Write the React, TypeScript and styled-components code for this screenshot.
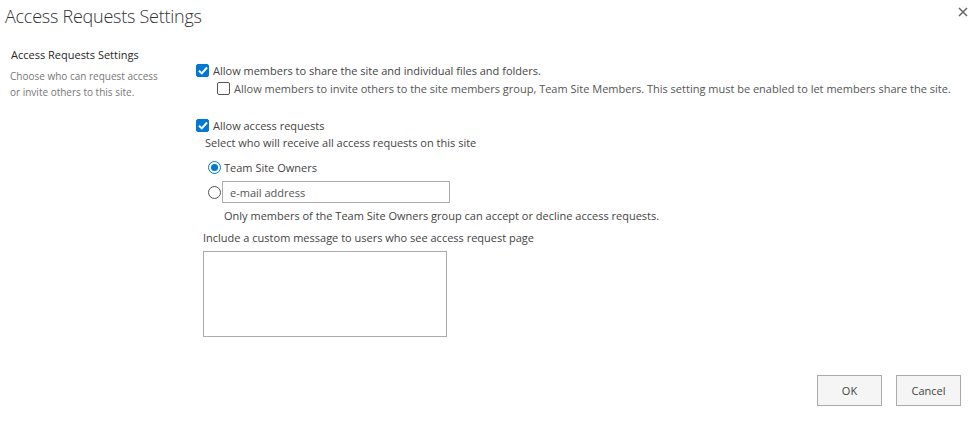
import React from "react";
import styled, { createGlobalStyle } from "styled-components";

const Global = createGlobalStyle`
  html, body { margin: 0; padding: 0; background: #fff; }
  body { font-family: "Open Sans", "Noto Sans", sans-serif; color: #444; }
  * { box-sizing: border-box; }
`;

const Page = styled.div`
  width: 978px;
  height: 427px;
  display: flex;
  flex-direction: column;
`;

const Header = styled.div`
  display: flex;
  justify-content: space-between;
  align-items: flex-start;
  padding: 4px 10px 0 5px;
  height: 44px;
`;

const Title = styled.h1`
  margin: 0;
  font-weight: 300;
  font-size: 18px;
  color: #333;
  letter-spacing: -0.25px;
`;

const Close = styled.button`
  border: 0;
  background: none;
  padding: 0;
  margin-top: 3px;
  width: 10px;
  height: 10px;
  display: flex;
  cursor: pointer;
`;

const Body = styled.div`
  display: flex;
  padding-left: 10px;
`;

const Left = styled.div`
  width: 186px;
  flex: none;
`;

const SectionTitle = styled.div`
  font-size: 11px;
  color: #262626;
  margin-top: 3px;
  padding-left: 1px;
  line-height: 16px;
`;

const SectionDesc = styled.div`
  font-size: 10px;
  color: #777;
  line-height: 16px;
  margin-top: 5px;
`;

const Right = styled.div`
  display: flex;
  flex-direction: column;
  font-size: 11px;
  color: #444;
  padding-top: 17px;
`;

const CheckRow = styled.label<{ $indent?: number; $mt?: number; $muted?: boolean }>`
  display: flex;
  align-items: center;
  gap: 4px;
  margin-left: ${(p) => p.$indent ?? 0}px;
  margin-top: ${(p) => p.$mt ?? 0}px;
  height: 18px;
  white-space: nowrap;
  color: ${(p) => (p.$muted ? "#555" : "#444")};
`;

const Box = styled.span<{ $checked?: boolean }>`
  width: 13px;
  height: 13px;
  border-radius: 2px;
  flex: none;
  display: flex;
  align-items: center;
  justify-content: center;
  background: ${(p) => (p.$checked ? "#0078d4" : "#fff")};
  border: 1px solid ${(p) => (p.$checked ? "#0078d4" : "#555")};
`;

const Text = styled.span<{ $indent?: number; $mt?: number }>`
  display: block;
  margin-left: ${(p) => p.$indent ?? 0}px;
  margin-top: ${(p) => p.$mt ?? 0}px;
  line-height: 18px;
  white-space: nowrap;
`;

const RadioRow = styled.div<{ $mt?: number; $gap?: number }>`
  display: flex;
  align-items: center;
  gap: ${(p) => p.$gap ?? 3}px;
  margin-left: 12px;
  margin-top: ${(p) => p.$mt ?? 0}px;
`;

const Radio = styled.span<{ $checked?: boolean }>`
  width: 13px;
  height: 13px;
  border-radius: 50%;
  flex: none;
  border: 1px solid ${(p) => (p.$checked ? "#0078d4" : "#555")};
  display: flex;
  align-items: center;
  justify-content: center;
  &::after {
    content: "";
    width: 7px;
    height: 7px;
    border-radius: 50%;
    background: ${(p) => (p.$checked ? "#0078d4" : "transparent")};
  }
`;

const EmailInput = styled.div`
  width: 228px;
  height: 22px;
  border: 1px solid #ababab;
  padding: 0 7px;
  display: flex;
  align-items: center;
  color: #555;
  font-size: 11px;
`;

const TextArea = styled.div`
  width: 244px;
  height: 86px;
  border: 1px solid #ababab;
  margin-left: 7px;
  margin-top: 4px;
`;

const Footer = styled.div`
  display: flex;
  justify-content: flex-end;
  gap: 14px;
  padding-right: 17px;
  margin-top: 38px;
`;

const Button = styled.button`
  width: 65px;
  height: 31px;
  border: 1px solid #ababab;
  background: #f5f5f5;
  font-family: inherit;
  font-size: 11px;
  color: #444;
  padding: 0;
`;

const Check = () => (
  <svg width="10" height="9" viewBox="0 0 10 9">
    <path d="M1 4.8 L3.8 7.4 L9 1.5" stroke="#fff" strokeWidth="2" fill="none" />
  </svg>
);

export default function App() {
  return (
    <Page>
      <Global />
      <Header>
        <Title>Access Requests Settings</Title>
        <Close aria-label="Close">
          <svg width="10" height="10" viewBox="0 0 10 10">
            <path d="M1 1 L9 9 M9 1 L1 9" stroke="#666" strokeWidth="1.5" />
          </svg>
        </Close>
      </Header>
      <Body>
        <Left>
          <SectionTitle>Access Requests Settings</SectionTitle>
          <SectionDesc>
            Choose who can request access
            <br />
            or invite others to this site.
          </SectionDesc>
        </Left>
        <Right>
          <CheckRow>
            <Box $checked>
              <Check />
            </Box>
            <span>Allow members to share the site and individual files and folders.</span>
          </CheckRow>
          <CheckRow $indent={21} $muted>
            <Box />
            <span>
              Allow members to invite others to the site members group, Team Site Members. This setting must be
              enabled to let members share the site.
            </span>
          </CheckRow>
          <CheckRow $mt={19}>
            <Box $checked>
              <Check />
            </Box>
            <span>Allow access requests</span>
          </CheckRow>
          <Text $indent={9}>Select who will receive all access requests on this site</Text>
          <RadioRow $mt={8}>
            <Radio $checked />
            <span>Team Site Owners</span>
          </RadioRow>
          <RadioRow $mt={6} $gap={1}>
            <Radio />
            <EmailInput>e-mail address</EmailInput>
          </RadioRow>
          <Text $indent={28} $mt={4}>Only members of the Team Site Owners group can accept or decline access requests.</Text>
          <Text $indent={7} $mt={4}>Include a custom message to users who see access request page</Text>
          <TextArea />
        </Right>
      </Body>
      <Footer>
        <Button>OK</Button>
        <Button>Cancel</Button>
      </Footer>
    </Page>
  );
}
